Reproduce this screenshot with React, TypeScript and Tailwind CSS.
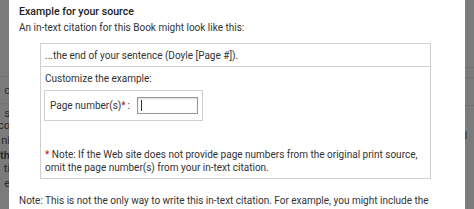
import React from "react";

const font = { fontFamily: "Roboto, 'Liberation Sans', sans-serif" };

function LeftStrip() {
  return (
    <div className="w-[9px] shrink-0 bg-[#7b7b7b] overflow-hidden flex flex-col items-end text-[11px] leading-[12px] text-[#2a2a2a] whitespace-nowrap">
      <div className="h-[77px] w-full border-b border-[#727272] shrink-0" />
      <div className="mt-[8px] -mr-px">c</div>
      <div className="h-[7px] w-full border-b border-[#727272] shrink-0" />
      <div className="mt-[4px] -mr-px">s</div>
      <div className="-mr-px">co</div>
      <div className="mt-[3px] -mr-px">ni</div>
      <div className="mt-[3px] -mr-px font-bold">th</div>
      <div className="mt-[1px] -mr-px">ti</div>
      <div className="mt-[3px] -mr-px">e</div>
    </div>
  );
}

function RightStrip() {
  return (
    <div className="w-[9px] shrink-0 bg-[#7b7b7b] overflow-hidden flex flex-col text-[11px] leading-[12px] whitespace-nowrap">
      <div className="mt-[29px] -ml-[4px] text-[#6e6e6e]">r</div>
      <div className="h-[27px] w-full border-b border-[#737373] shrink-0" />
      <div className="h-[10px] w-full border-b border-[#737373] shrink-0" />
      <div className="h-[28px] w-full border-b border-[#6f6f6f] shrink-0" />
      <div className="mt-[24px] -ml-[4px] text-[#3a3a3a]">d</div>
    </div>
  );
}

export default function App() {
  return (
    <div className="w-[474px] h-[209px] overflow-hidden flex bg-[#7b7b7b]" style={font}>
      <LeftStrip />
      <div className="flex-1 bg-white pl-[10px] pt-[5px] text-[#333] overflow-hidden">
        <div className="text-[10.6px] leading-[14px] font-medium text-[#222]">Example for your source</div>
        <div className="text-[10px] leading-[14px] mt-[2px]">An in-text citation for this Book might look like this:</div>
        <div className="ml-[21px] mr-[34px] mt-[8px] border border-[#cfcfcf] text-[10px]">
          <div className="h-[23px] flex items-center pl-[4px] border-b border-[#d0d0d0]">
            ...the end of your sentence (Doyle [Page #]).
          </div>
          <div className="pl-[4px] pt-[5px] pb-[4px]">
            <div className="leading-[14px]">Customize the example:</div>
            <div className="mt-[4px] -ml-px w-[159px] h-[31px] border border-[#cfcfcf] flex items-center pl-[5px]">
              <span>Page number(s)</span>
              <span className="text-[#d0021b]">*</span>
              <span className="ml-[2px]">:</span>
              <div className="ml-[7px] w-[61px] h-[17px] border border-[#9a9a9a] shadow-[inset_0_1px_2px_rgba(0,0,0,0.15)] flex items-center pl-[3px]">
                <div className="w-px h-[11px] bg-[#333]" />
              </div>
            </div>
            <div className="mt-[27px] leading-[13px]">
              <div>
                <span className="text-[#d0021b]">*</span> Note: If the Web site does not provide page numbers from the original print source,
              </div>
              <div>omit the page number(s) from your in-text citation.</div>
            </div>
          </div>
        </div>
        <div className="text-[10px] leading-[14px] mt-[15px] whitespace-nowrap">
          Note: This is not the only way to write this in-text citation. For example, you might include the
        </div>
      </div>
      <RightStrip />
    </div>
  );
}
